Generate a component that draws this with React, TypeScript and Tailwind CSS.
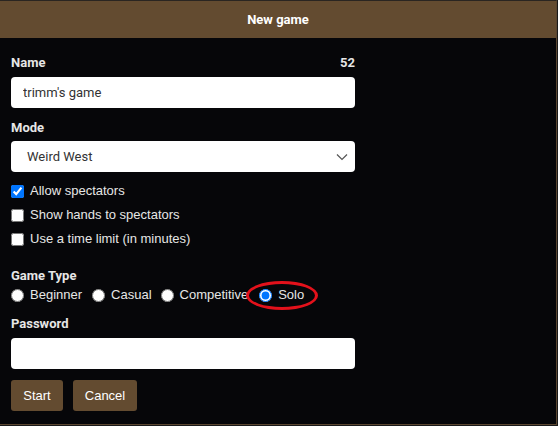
import React from "react";

export default function App() {
  const roboto = { fontFamily: "Roboto, 'Liberation Sans', sans-serif" };
  return (
    <div className="w-[558px] h-[426px] bg-[#1a1a1a] overflow-hidden">
      <div className="w-[557px] h-[425px] bg-[#060609] border-t border-r border-b border-t-[#2a2521] border-r-[#5a4631] border-b-[#5a4631] flex flex-col">
        <div
          className="h-[37px] bg-[#634b30] flex items-center justify-center text-white text-[13px] font-bold"
          style={roboto}
        >
          New game
        </div>
        <div className="pl-[11px] pt-[17px] w-[355px] text-[#e6e6e6]" style={{ fontFamily: "'Liberation Sans', Arial, sans-serif" }}>
          <div className="flex justify-between text-[13px] font-bold leading-[15px]" style={roboto}>
            <span>Name</span>
            <span>52</span>
          </div>
          <input
            className="mt-[7px] w-full h-[31px] bg-white rounded-[4px] px-[12px] text-[13px] text-[#333] outline-none"
            style={roboto}
            defaultValue="trimm's game"
          />
          <div className="mt-[12px] text-[13px] font-bold leading-[15px]" style={roboto}>Mode</div>
          <div className="mt-[6px] w-full h-[31px] bg-white rounded-[4px] pl-[16px] pr-[7px] flex items-center justify-between text-[13px] text-[#333]" style={roboto}>
            <span>Weird West</span>
            <svg width="12" height="8" viewBox="0 0 12 8" fill="none">
              <path d="M1 1.5 L6 6.5 L11 1.5" stroke="#555" strokeWidth="1.2" />
            </svg>
          </div>
          <div className="mt-[7px] flex flex-col text-[13px]">
            {[
              ["Allow spectators", true],
              ["Show hands to spectators", false],
              ["Use a time limit (in minutes)", false],
            ].map(([label, checked]) => (
              <label key={label as string} className="h-[24px] flex items-center gap-[6px]">
                <input type="checkbox" defaultChecked={checked as boolean} className="w-[13px] h-[13px] m-0" />
                <span>{label as string}</span>
              </label>
            ))}
          </div>
          <div className="mt-[17px] text-[13px] font-bold leading-[15px]" style={roboto}>Game Type</div>
          <div className="relative mt-[4px] h-[16px] flex items-center text-[13px]">
            <label className="flex items-center gap-[6px] mr-[10px]">
              <input type="radio" name="gt" className="w-[13px] h-[13px] m-0" />
              <span>Beginner</span>
            </label>
            <label className="flex items-center gap-[6px] mr-[9px]">
              <input type="radio" name="gt" className="w-[13px] h-[13px] m-0" />
              <span>Casual</span>
            </label>
            <label className="flex items-center gap-[6px] mr-[11px]">
              <input type="radio" name="gt" className="w-[13px] h-[13px] m-0" />
              <span>Competitive</span>
            </label>
            <label className="flex items-center gap-[6px]">
              <input type="radio" name="gt" defaultChecked className="w-[13px] h-[13px] m-0" />
              <span>Solo</span>
            </label>
            <div className="absolute left-[235px] top-[-6px] w-[72px] h-[29px] rounded-[50%] border-[3px] border-[#e3111b] pointer-events-none" />
          </div>
          <div className="mt-[13px] text-[13px] font-bold leading-[15px]" style={roboto}>Password</div>
          <input
            type="password"
            className="mt-[7px] w-full h-[31px] bg-white rounded-[4px] px-[12px] text-[13px] text-[#333] outline-none"
          />
          <div className="mt-[11px] flex gap-[10px]">
            <button className="h-[31px] w-[52px] bg-[#634b30] rounded-[3px] text-white text-[13px]">Start</button>
            <button className="h-[31px] w-[64px] bg-[#634b30] rounded-[3px] text-white text-[13px]">Cancel</button>
          </div>
        </div>
      </div>
    </div>
  );
}
